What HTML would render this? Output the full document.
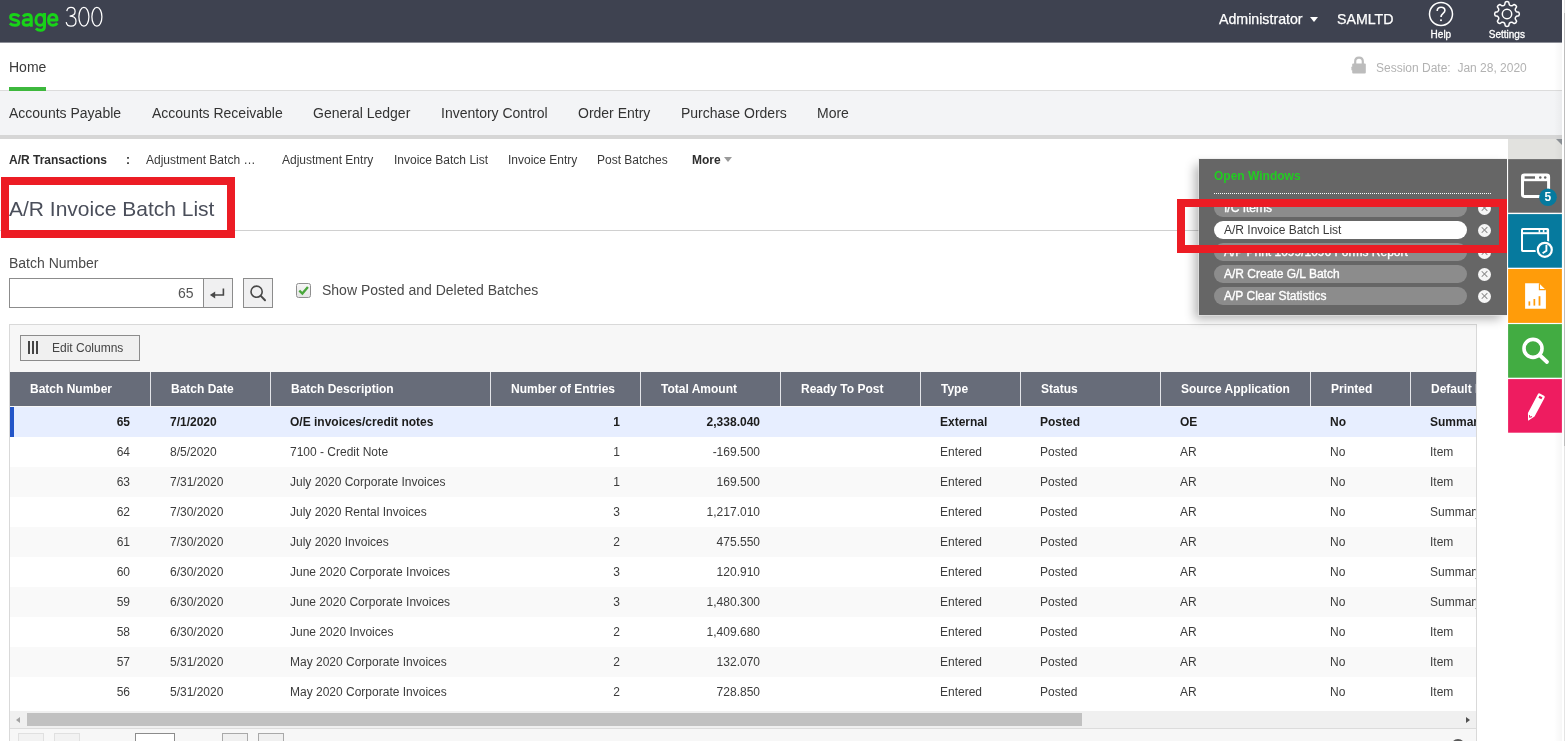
<!DOCTYPE html>
<html>
<head>
<meta charset="utf-8">
<title>Sage 300</title>
<style>
*{box-sizing:border-box;margin:0;padding:0}
html,body{width:1565px;height:741px;overflow:hidden;background:#fff}
body{will-change:transform;font-family:"Liberation Sans",sans-serif;color:#333;position:relative;font-size:12px}
.abs{position:absolute}
.t{position:absolute;white-space:nowrap;line-height:1}
/* top bar */
#top{left:0;top:0;width:1565px;height:43px;background:#3e4250;border-bottom:1px solid #8d8f98}
#top .t{color:#fff}
/* home bar */
#homebar{left:0;top:43px;width:1565px;height:48px;background:#fff;border-bottom:1px solid #dcdcdc}
/* nav */
#nav{left:0;top:91px;width:1565px;height:48px;background:#f3f4f6;border-bottom:4px solid #d6d6d6}
#nav .t{font-size:14px;color:#333;top:15px}
/* subnav */
#sub .t{font-size:12px;color:#3a3a3a;top:154px}
/* grid */
#grid{left:9px;top:324px;width:1468px;height:430px;border:1px solid #d9d9d9;background:#f7f7f7}
#ghead{left:0;top:47px;width:1466px;height:34px;background:#676c79;overflow:hidden}
#ghead .h{position:absolute;top:0;height:34px;border-left:1px solid #e3e4e8;color:#fff;font-weight:bold;font-size:12px;line-height:34px;padding-left:20px;white-space:nowrap}
#ghead .h:first-child{border-left:none}
#rows{left:0;top:82px;width:1466px;height:305px;overflow:hidden;background:#fff}
.r{position:absolute;left:0;width:1466px;height:30px;font-size:12px;line-height:30px;color:#3c3c3c;white-space:nowrap}
.r.alt{background:#f9f9f9}
.r.sel{background:#e7eeff;font-weight:bold;color:#1c1c1c}
.r span{position:absolute;top:0}
.r .n{text-align:right}
.pill{position:absolute;left:15px;width:253px;height:18px;border-radius:9px;background:#8c8c8c;color:#fff;font-size:12px;line-height:18px;padding-left:10px;white-space:nowrap;-webkit-text-stroke:0.35px #fff}
.pill.on{background:#fff;color:#3a3a3a;-webkit-text-stroke:0}
.x{position:absolute;left:278.6px;width:13.6px;height:13.6px;border-radius:50%;background:#f6f6f6;margin-top:-0.4px}
.x:before,.x:after{content:"";position:absolute;left:6.2px;top:2.8px;width:1.2px;height:8px;background:#8a8a8a;transform:rotate(45deg)}
.x:after{transform:rotate(-45deg)}
</style>
</head>
<body>

<!-- TOP BAR -->
<div id="top" class="abs">
  <svg class="abs" id="logo" style="left:0;top:0" width="120" height="43" viewBox="0 0 120 43">
    <g fill="none" stroke="#18d418" stroke-width="2.95" stroke-linejoin="round">
      <path d="M19.4 16.3 C17.8 15.0 16.0 14.5 14.3 14.5 C11.9 14.5 10.6 15.7 10.6 17.2 C10.6 18.9 12.1 19.5 14.6 20.0 C17.3 20.5 18.8 21.2 18.8 22.8 C18.8 24.4 17.3 25.3 15.0 25.3 C13.0 25.3 11.3 24.7 9.8 23.4"/>
      <path d="M22.9 16.5 C24.2 15.2 25.7 14.5 27.3 14.5 C29.9 14.5 31.3 15.9 31.3 18.4 V26.8 M31.3 19.8 H27 C24.5 19.8 23.1 20.8 23.1 22.6 C23.1 24.3 24.4 25.3 26.5 25.3 C28.6 25.3 30.4 24.3 31.3 22.6"/>
      <path d="M44.5 13.0 V26.2 C44.5 28.9 42.8 30.3 40.3 30.3 C38.6 30.3 37.2 29.7 35.9 28.5"/>
      <ellipse cx="40.2" cy="19.9" rx="4.3" ry="5.4"/>
      <path d="M48.6 19.9 H57.0 C57.0 16.5 55.4 14.5 52.8 14.5 C50.2 14.5 48.5 16.7 48.5 19.9 C48.5 23.2 50.3 25.3 53.0 25.3 C54.8 25.3 56.3 24.5 57.3 23.1"/>
    </g>
    <g fill="none" stroke="#fff" stroke-width="1.25">
      <path d="M66.8 11.2 C67.2 8.7 69 7.4 71 7.4 C73.6 7.4 75.1 9.1 75.1 11.6 C75.1 14.4 73.2 16 69.6 16 C73.8 16 76 18 76 21 C76 24.2 74 26.2 71 26.2 C68.3 26.2 66.6 24.7 66.2 22.1"/>
      <ellipse cx="83.9" cy="16.8" rx="5" ry="9.4"/>
      <ellipse cx="96.9" cy="16.8" rx="5" ry="9.4"/>
    </g>
  </svg>
  <div class="t" style="left:1219px;top:11.5px;font-size:14.2px;-webkit-text-stroke:0.25px #fff">Administrator</div>
  <div class="abs" style="left:1310px;top:17px;width:0;height:0;border-left:4.5px solid transparent;border-right:4.5px solid transparent;border-top:5px solid #fff"></div>
  <div class="t" style="left:1337px;top:11.5px;font-size:14.2px;-webkit-text-stroke:0.25px #fff">SAMLTD</div>
  <svg class="abs" style="left:1427px;top:0.45px" width="28" height="28" viewBox="0 0 28 28" fill="none" stroke="#fff" stroke-width="1.5">
    <circle cx="14" cy="14" r="11.5"/>
    <path d="M10.2 11 C10.2 8.6 11.9 7.2 14.1 7.2 C16.3 7.2 17.9 8.6 17.9 10.6 C17.9 13.4 14 13.6 14 17" stroke-width="1.6"/>
    <circle cx="14" cy="20.3" r="1" fill="#fff" stroke="none"/>
  </svg>
  <div class="t" style="left:1430.6px;top:29.5px;font-size:10px;-webkit-text-stroke:0.3px #fff">Help</div>
  <svg class="abs" style="left:1493px;top:0.4px" width="28" height="28" viewBox="0 0 28 28" fill="none" stroke="#fff" stroke-width="1.5" stroke-linejoin="round">
    <path d="M11.69 4.68 L12.31 2.12 Q14.00 1.10 15.69 2.12 L16.31 4.68 Q17.33 5.96 18.95 5.78 L21.21 4.40 Q23.12 4.88 23.60 6.79 L22.22 9.05 Q22.04 10.67 23.32 11.69 L25.88 12.31 Q26.90 14.00 25.88 15.69 L23.32 16.31 Q22.04 17.33 22.22 18.95 L23.60 21.21 Q23.12 23.12 21.21 23.60 L18.95 22.22 Q17.33 22.04 16.31 23.32 L15.69 25.88 Q14.00 26.90 12.31 25.88 L11.69 23.32 Q10.67 22.04 9.05 22.22 L6.79 23.60 Q4.88 23.12 4.40 21.21 L5.78 18.95 Q5.96 17.33 4.68 16.31 L2.12 15.69 Q1.10 14.00 2.12 12.31 L4.68 11.69 Q5.96 10.67 5.78 9.05 L4.40 6.79 Q4.88 4.88 6.79 4.40 L9.05 5.78 Q10.67 5.96 11.69 4.68 Z"/>
    <circle cx="14" cy="14" r="4.7"/>
  </svg>
  <div class="t" style="left:1488.8px;top:29.5px;font-size:10px;-webkit-text-stroke:0.3px #fff">Settings</div>
</div>

<!-- HOME BAR -->
<div id="homebar" class="abs">
  <div class="t" style="left:9px;top:17px;font-size:14px;color:#3a3a3a">Home</div>
  <div class="abs" style="left:9px;top:44px;width:37px;height:4px;background:#3db83d"></div>
  <svg class="abs" style="left:1351px;top:13px" width="16" height="18" viewBox="0 0 16 18">
    <path d="M4.2 8 V5.2 C4.2 2.9 5.8 1.6 8 1.6 C10.2 1.6 11.8 2.9 11.8 5.2 V8" fill="none" stroke="#bcbcbc" stroke-width="2.2"/>
    <rect x="1.2" y="7.6" width="13.6" height="9.8" rx="1" fill="#bcbcbc"/><rect x="0.4" y="10.5" width="1.5" height="4" rx="0.7" fill="#bcbcbc"/>
  </svg>
  <div class="t" style="left:1376px;top:19px;font-size:12px;color:#b2b2b2">Session Date:&nbsp; Jan 28, 2020</div>
</div>

<!-- NAV -->
<div id="nav" class="abs">
  <div class="t" style="left:9px">Accounts Payable</div>
  <div class="t" style="left:152px">Accounts Receivable</div>
  <div class="t" style="left:313px">General Ledger</div>
  <div class="t" style="left:441px">Inventory Control</div>
  <div class="t" style="left:578px">Order Entry</div>
  <div class="t" style="left:681px">Purchase Orders</div>
  <div class="t" style="left:817px">More</div>
</div>

<!-- SUB NAV -->
<div id="sub">
  <div class="t" style="left:9px;font-weight:bold;color:#2e2e2e">A/R Transactions</div>
  <div class="t" style="left:126px;font-weight:bold;color:#2e2e2e">:</div>
  <div class="t" style="left:146px">Adjustment Batch &hellip;</div>
  <div class="t" style="left:282px">Adjustment Entry</div>
  <div class="t" style="left:394px">Invoice Batch List</div>
  <div class="t" style="left:508px">Invoice Entry</div>
  <div class="t" style="left:597px">Post Batches</div>
  <div class="t" style="left:692px;font-weight:bold;color:#2e2e2e">More</div>
  <div class="abs" style="left:724.3px;top:157.2px;width:0;height:0;border-left:4.9px solid transparent;border-right:4.9px solid transparent;border-top:5.4px solid #9a9a9a"></div>
</div>

<!-- TITLE -->
<div class="abs" style="left:0;top:230px;width:1477px;height:1px;background:#d0d0d0"></div>
<div class="t" id="title" style="left:9px;top:198px;font-size:21px;color:#4a4e5a">A/R Invoice Batch List</div>
<div class="abs" id="red1" style="left:1px;top:177px;width:234px;height:61.4px;border:8px solid #ec1c24"></div>

<!-- FORM -->
<div class="t" style="left:9px;top:256px;font-size:14px;color:#4a4a4a">Batch Number</div>
<div class="abs" style="left:9px;top:278px;width:195px;height:30px;border:1px solid #8c8c8c;background:#fff"></div>
<div class="t" style="left:178px;top:286px;font-size:14px;color:#555">65</div>
<div class="abs" style="left:203px;top:278px;width:30px;height:30px;border:1px solid #8c8c8c;background:#f0f0f1"></div>
<svg class="abs" style="left:205px;top:284px" width="24" height="20" viewBox="0 0 24 20" fill="none" stroke="#484848" stroke-width="1.6">
  <path d="M18.4 4.4 V11 H9"/><path d="M4.9 11 L10.2 7.6 V14.4 Z" fill="#484848" stroke="none"/>
</svg>
<div class="abs" style="left:243px;top:278px;width:30px;height:30px;border:1px solid #8c8c8c;background:#f0f0f1"></div>
<svg class="abs" style="left:249px;top:284px" width="18" height="18" viewBox="0 0 18 18" fill="none" stroke="#484848" stroke-width="1.6">
  <circle cx="7.6" cy="7.7" r="5.6"/><path d="M11.8 11.9 L16 16.2" stroke-width="2" stroke-linecap="round"/>
</svg>
<div class="abs" style="left:296px;top:283px;width:15px;height:15px;border:1px solid #8f8f8f;background:linear-gradient(#f6f6f6,#e4e4e4);border-radius:2.5px"></div>
<svg class="abs" style="left:297px;top:284px" width="13" height="13" viewBox="0 0 13 13" fill="none" stroke="#48a63a" stroke-width="2.3">
  <path d="M2.3 6.6 L5.4 9.6 L10.9 3"/>
</svg>
<div class="t" style="left:322px;top:283px;font-size:14px;color:#4a4a4a">Show Posted and Deleted Batches</div>

<!-- GRID -->
<div id="grid" class="abs">
 <div class="abs" style="left:10px;top:10px;width:120px;height:26px;border:1px solid #8c8c8c;background:#f0f0f0"></div>
 <div class="abs" style="left:18px;top:16px;width:2px;height:13px;background:#444"></div><div class="abs" style="left:22px;top:16px;width:2px;height:13px;background:#444"></div><div class="abs" style="left:26px;top:16px;width:2px;height:13px;background:#444"></div>
 <div class="t" style="left:42px;top:17px;font-size:12px;color:#444">Edit Columns</div>
 <div id="ghead" class="abs">
  <div class="h" style="left:0px;width:140px">Batch Number</div>
  <div class="h" style="left:140px;width:120px">Batch Date</div>
  <div class="h" style="left:260px;width:220px">Batch Description</div>
  <div class="h" style="left:480px;width:150px">Number of Entries</div>
  <div class="h" style="left:630px;width:140px">Total Amount</div>
  <div class="h" style="left:770px;width:140px">Ready To Post</div>
  <div class="h" style="left:910px;width:100px">Type</div>
  <div class="h" style="left:1010px;width:140px">Status</div>
  <div class="h" style="left:1150px;width:150px">Source Application</div>
  <div class="h" style="left:1300px;width:100px">Printed</div>
  <div class="h" style="left:1400px;width:100px">Default Detail Type</div>
 </div>
 <div id="rows" class="abs">
  <div class="r sel" style="top:0px"><i style="position:absolute;left:0;top:0;width:4px;height:30px;background:#2355c8"></i><span class="n" style="left:0;width:120px">65</span><span style="left:160px">7/1/2020</span><span style="left:280px">O/E invoices/credit notes</span><span class="n" style="left:480px;width:130px">1</span><span class="n" style="left:630px;width:120px">2,338.040</span><span style="left:930px">External</span><span style="left:1030px">Posted</span><span style="left:1170px">OE</span><span style="left:1320px">No</span><span style="left:1420px">Summary</span></div>
  <div class="r" style="top:30px"><span class="n" style="left:0;width:120px">64</span><span style="left:160px">8/5/2020</span><span style="left:280px">7100 - Credit Note</span><span class="n" style="left:480px;width:130px">1</span><span class="n" style="left:630px;width:120px">-169.500</span><span style="left:930px">Entered</span><span style="left:1030px">Posted</span><span style="left:1170px">AR</span><span style="left:1320px">No</span><span style="left:1420px">Item</span></div>
  <div class="r alt" style="top:60px"><span class="n" style="left:0;width:120px">63</span><span style="left:160px">7/31/2020</span><span style="left:280px">July 2020 Corporate Invoices</span><span class="n" style="left:480px;width:130px">1</span><span class="n" style="left:630px;width:120px">169.500</span><span style="left:930px">Entered</span><span style="left:1030px">Posted</span><span style="left:1170px">AR</span><span style="left:1320px">No</span><span style="left:1420px">Item</span></div>
  <div class="r" style="top:90px"><span class="n" style="left:0;width:120px">62</span><span style="left:160px">7/30/2020</span><span style="left:280px">July 2020 Rental Invoices</span><span class="n" style="left:480px;width:130px">3</span><span class="n" style="left:630px;width:120px">1,217.010</span><span style="left:930px">Entered</span><span style="left:1030px">Posted</span><span style="left:1170px">AR</span><span style="left:1320px">No</span><span style="left:1420px">Summary</span></div>
  <div class="r alt" style="top:120px"><span class="n" style="left:0;width:120px">61</span><span style="left:160px">7/30/2020</span><span style="left:280px">July 2020 Invoices</span><span class="n" style="left:480px;width:130px">2</span><span class="n" style="left:630px;width:120px">475.550</span><span style="left:930px">Entered</span><span style="left:1030px">Posted</span><span style="left:1170px">AR</span><span style="left:1320px">No</span><span style="left:1420px">Item</span></div>
  <div class="r" style="top:150px"><span class="n" style="left:0;width:120px">60</span><span style="left:160px">6/30/2020</span><span style="left:280px">June 2020 Corporate Invoices</span><span class="n" style="left:480px;width:130px">3</span><span class="n" style="left:630px;width:120px">120.910</span><span style="left:930px">Entered</span><span style="left:1030px">Posted</span><span style="left:1170px">AR</span><span style="left:1320px">No</span><span style="left:1420px">Summary</span></div>
  <div class="r alt" style="top:180px"><span class="n" style="left:0;width:120px">59</span><span style="left:160px">6/30/2020</span><span style="left:280px">June 2020 Corporate Invoices</span><span class="n" style="left:480px;width:130px">3</span><span class="n" style="left:630px;width:120px">1,480.300</span><span style="left:930px">Entered</span><span style="left:1030px">Posted</span><span style="left:1170px">AR</span><span style="left:1320px">No</span><span style="left:1420px">Summary</span></div>
  <div class="r" style="top:210px"><span class="n" style="left:0;width:120px">58</span><span style="left:160px">6/30/2020</span><span style="left:280px">June 2020 Invoices</span><span class="n" style="left:480px;width:130px">2</span><span class="n" style="left:630px;width:120px">1,409.680</span><span style="left:930px">Entered</span><span style="left:1030px">Posted</span><span style="left:1170px">AR</span><span style="left:1320px">No</span><span style="left:1420px">Item</span></div>
  <div class="r alt" style="top:240px"><span class="n" style="left:0;width:120px">57</span><span style="left:160px">5/31/2020</span><span style="left:280px">May 2020 Corporate Invoices</span><span class="n" style="left:480px;width:130px">2</span><span class="n" style="left:630px;width:120px">132.070</span><span style="left:930px">Entered</span><span style="left:1030px">Posted</span><span style="left:1170px">AR</span><span style="left:1320px">No</span><span style="left:1420px">Item</span></div>
  <div class="r" style="top:270px"><span class="n" style="left:0;width:120px">56</span><span style="left:160px">5/31/2020</span><span style="left:280px">May 2020 Corporate Invoices</span><span class="n" style="left:480px;width:130px">2</span><span class="n" style="left:630px;width:120px">728.850</span><span style="left:930px">Entered</span><span style="left:1030px">Posted</span><span style="left:1170px">AR</span><span style="left:1320px">No</span><span style="left:1420px">Item</span></div>
 </div>
 <div class="abs" id="hscroll" style="left:0;top:386px;width:1466px;height:17px;background:#f0f0f0"></div>
 <div class="abs" style="left:17px;top:388px;width:1055px;height:13px;background:#c1c1c1"></div>
 <div class="abs" style="left:6px;top:391.5px;width:0;height:0;border-top:3.7px solid transparent;border-bottom:3.7px solid transparent;border-right:4.4px solid #a3a3a3"></div>
 <div class="abs" style="left:1456px;top:391.5px;width:0;height:0;border-top:3.7px solid transparent;border-bottom:3.7px solid transparent;border-left:4.4px solid #505050"></div>
 <div class="abs" style="left:0;top:403px;width:1466px;height:30px;background:#f7f7f7;border-top:1px solid #dcdcdc"></div>
 <div class="abs" style="left:8px;top:408px;width:26px;height:26px;border:1px solid #e0e0e0;background:#f2f2f2"></div>
 <div class="abs" style="left:44px;top:408px;width:26px;height:26px;border:1px solid #e0e0e0;background:#f2f2f2"></div>
 <div class="abs" style="left:125px;top:408px;width:40px;height:26px;border:1px solid #8c8c8c;background:#fff"></div>
 <div class="abs" style="left:212px;top:408px;width:26px;height:26px;border:1px solid #a9a9a9;background:#f0f0f0"></div>
 <div class="abs" style="left:248px;top:408px;width:26px;height:26px;border:1px solid #a9a9a9;background:#f0f0f0"></div>
 <div class="abs" style="left:1441px;top:413.6px;width:14px;height:14px;border:2px solid #5a5a5a;border-radius:50%"></div>
</div>

<!-- POPUP -->
<div class="abs" id="popup" style="left:1199px;top:159px;width:308px;height:155.5px;background:#666666;box-shadow:-5px 5px 10px -1px rgba(0,0,0,.3);outline:1px solid rgba(235,235,235,.55)">
  <div class="t" style="left:15px;top:11px;font-size:12px;font-weight:bold;color:#22cc22">Open Windows</div>
  <div class="abs" style="left:15px;top:34px;width:278px;height:1px;background:repeating-linear-gradient(90deg,#fff 0 1px,transparent 1px 2px)"></div>
  <div class="pill" style="top:40px">I/C Items</div><div class="x" style="top:43px"></div>
  <div class="pill on" style="top:62px">A/R Invoice Batch List</div><div class="x" style="top:65px"></div>
  <div class="pill" style="top:84px">A/P Print 1099/1096 Forms Report</div><div class="x" style="top:87px"></div>
  <div class="pill" style="top:106px">A/R Create G/L Batch</div><div class="x" style="top:109px"></div>
  <div class="pill" style="top:128px">A/P Clear Statistics</div><div class="x" style="top:131px"></div>
</div>
<div class="abs" id="red2" style="left:1177px;top:198.6px;width:329.6px;height:54.3px;border:8.2px solid #ec1c24"></div>

<!-- SIDEBAR -->
<div class="abs" style="left:1507px;top:139px;width:58px;height:300px;background:#fff"></div>
<div class="abs" style="left:1508px;top:139px;width:54px;height:20px;background:#e2e2df"></div>
<div class="abs" style="left:1555.5px;top:139px;width:0;height:0;border-top:6.5px solid #8d9297;border-left:6.5px solid transparent"></div>
<div class="abs" style="left:1554px;top:43px;width:8px;height:698px;background:linear-gradient(90deg,rgba(0,0,0,0),rgba(0,0,0,.035))"></div>
<div class="abs" style="left:1562px;top:0;width:3px;height:741px;background:#fff;border-right:1px solid #e4e4e4"></div>
<div class="abs" style="left:1564px;top:13px;width:1px;height:433px;background:#bdbdbd"></div>
<svg class="abs" style="left:1508px;top:159px" width="54" height="276" viewBox="0 0 54 276" fill="none">
  <rect x="0.1" y="0.1" width="53.8" height="53.6" fill="#666666"/>
  <rect x="0.1" y="55.1" width="53.8" height="53.6" fill="#067a9e"/>
  <rect x="0.1" y="110" width="53.8" height="53.9" fill="#ff9c0a"/>
  <rect x="0.1" y="165.1" width="53.8" height="53.6" fill="#42ac42"/>
  <rect x="0.1" y="220.1" width="53.8" height="53.6" fill="#ee1c60"/>
  <!-- window icon -->
  <rect x="14.5" y="16.1" width="26.1" height="21.3" rx="1.8" stroke="#fff" stroke-width="3"/>
  <rect x="14.5" y="15.4" width="26.1" height="6.8" fill="#fff"/>
  <rect x="16.6" y="17.3" width="10.4" height="2.4" fill="#666"/>
  <circle cx="32.3" cy="18.5" r="1.25" fill="#666"/><circle cx="37.2" cy="18.5" r="1.25" fill="#666"/>
  <circle cx="40" cy="38.2" r="8.8" fill="#067a9e"/>
  <!-- recent windows icon -->
  <rect x="14" y="70" width="26.1" height="22.1" rx="0.8" stroke="#fff" stroke-width="2"/>
  <path d="M14 74.2 H40" stroke="#fff" stroke-width="2"/>
  <rect x="33" y="71.6" width="1.7" height="1.5" fill="#fff" opacity="0"/>
  <path d="M15.5 72.1 H30.6 M32.2 72.1 H35 M36.4 72.1 H39" stroke="#067a9e" stroke-width="1.5" opacity="0"/>
  <rect x="30.6" y="70.6" width="1.6" height="3" fill="#fff"/><rect x="34.8" y="70.6" width="1.6" height="3" fill="#fff"/><rect x="38.6" y="70.6" width="1.2" height="3" fill="#fff"/>
  <circle cx="36.8" cy="90.8" r="9.4" fill="#067a9e"/>
  <circle cx="36.8" cy="90.8" r="7" stroke="#fff" stroke-width="2.2"/>
  <path d="M38.4 86 V91.8 L34.6 94.2" stroke="#fff" stroke-width="1.9"/>
  <!-- report icon -->
  <path d="M17.1 124.2 H31 L37.9 131 V149.7 H17.1 Z" fill="#fff"/>
  <path d="M31.4 124.4 V130.6 H37.7" stroke="#ff9c0a" stroke-width="1.1"/>
  <rect x="20.5" y="142.4" width="1.7" height="4.2" fill="#ff9c0a"/><rect x="25.5" y="140" width="1.7" height="6.6" fill="#ff9c0a"/><rect x="30.6" y="137.2" width="1.8" height="9.4" fill="#ff9c0a"/>
  <!-- search icon -->
  <circle cx="25" cy="189.4" r="9" stroke="#fff" stroke-width="3.6"/>
  <path d="M31.6 196 L39 203" stroke="#fff" stroke-width="3.8" stroke-linecap="round"/>
  <!-- pencil -->
  <g transform="translate(27 248.7) rotate(28)">
    <path d="M-3.75 -13.4 Q-3.75 -14.7 -2.4 -14.7 H2.4 Q3.75 -14.7 3.75 -13.4 V8 L0 14.7 L-3.75 8 Z" fill="#fff"/>
    <rect x="-1.7" y="-12.6" width="3.4" height="2.1" fill="#ee1c60"/>
    <path d="M-1.5 9.2 L0 11 L1.5 9.2" stroke="#ee1c60" stroke-width="1"/>
  </g>
</svg>
<div class="t" style="left:1544.6px;top:191.3px;font-size:12px;font-weight:bold;color:#fff">5</div>

</body>
</html>
